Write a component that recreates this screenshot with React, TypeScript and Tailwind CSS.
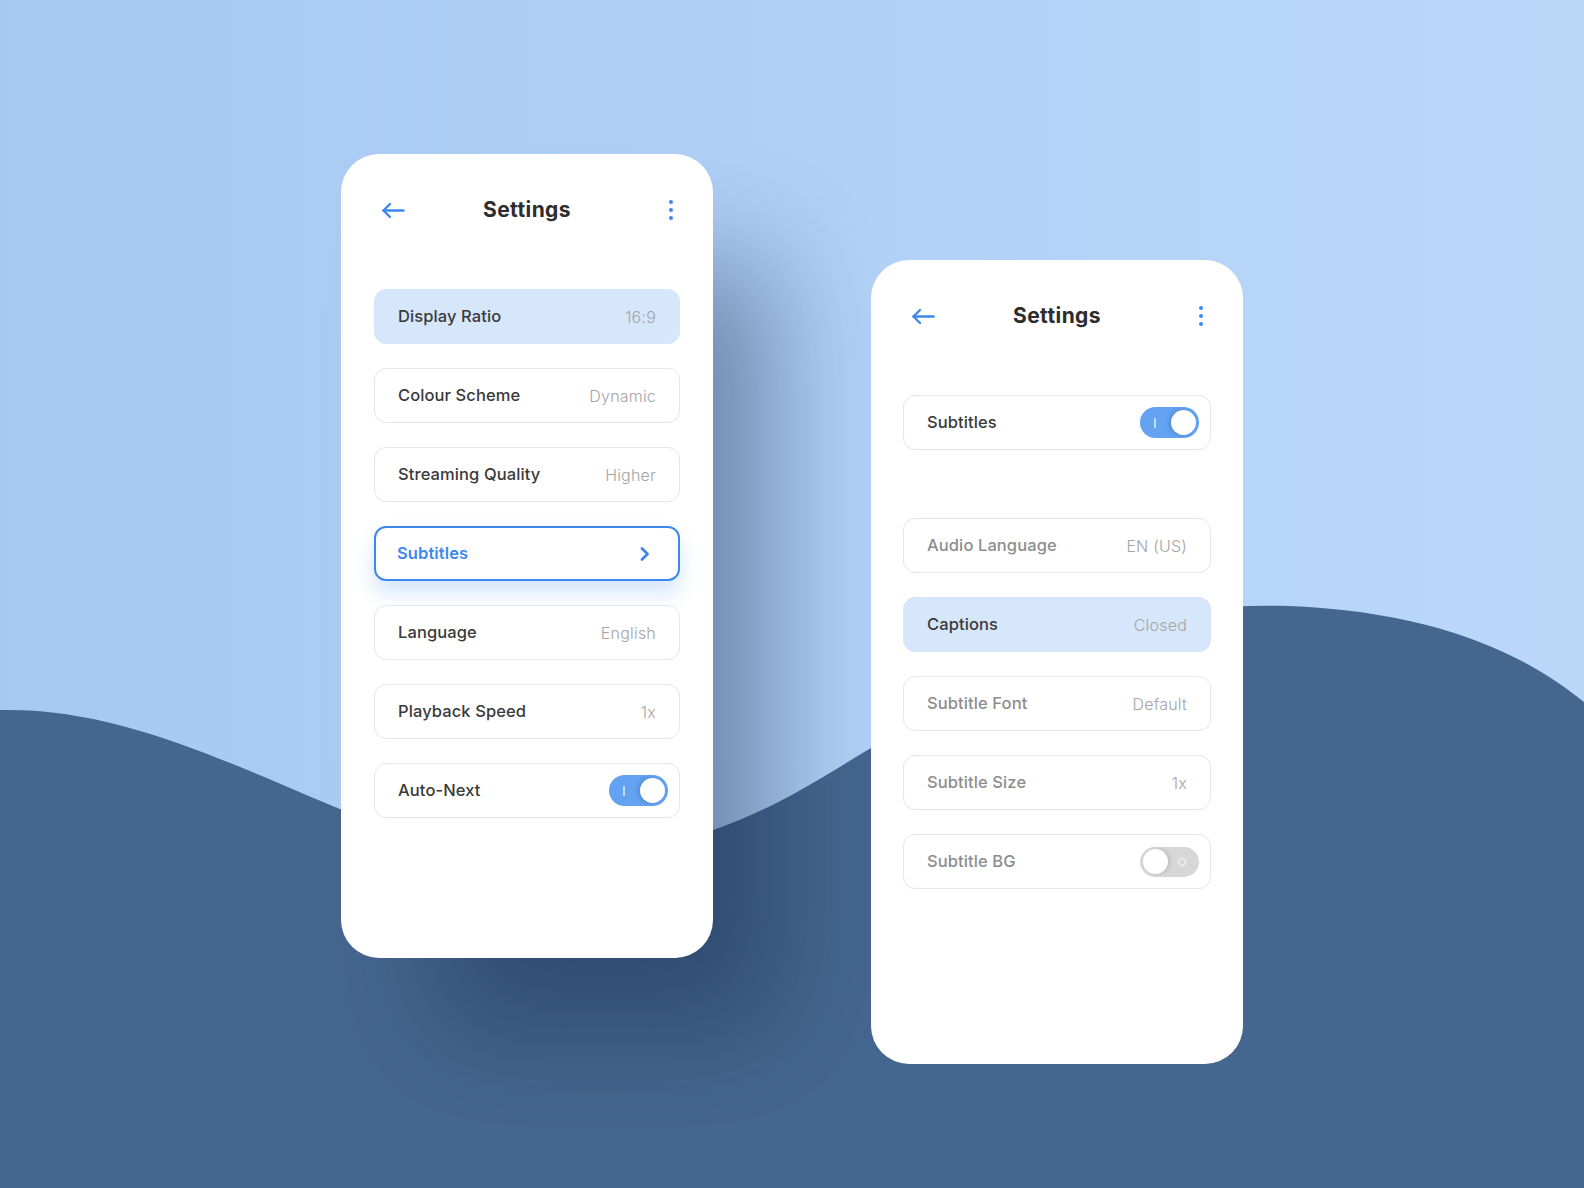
import React from 'react';

type Row = {
    label: string;
    value?: string;
    kind?: 'plain' | 'selected' | 'active' | 'toggle-on' | 'toggle-off';
    muted?: boolean;
};

const font = { fontFamily: 'Inter, "Noto Sans", sans-serif' };

const BackArrow = () => (
    <svg width="24" height="17" viewBox="0 0 24 17" fill="none" stroke="#3d88ee" strokeWidth={2.4} strokeLinecap="round" strokeLinejoin="round">
        <path d="M22.5 8.5H2.5" />
        <path d="M9 2L2.5 8.5L9 15" />
    </svg>
);

const MoreDots = () => (
    <div className="flex flex-col items-center gap-[3.5px]">
        <span className="block w-[4.5px] h-[4.5px] rounded-full bg-[#3d88ee]" />
        <span className="block w-[4.5px] h-[4.5px] rounded-full bg-[#3d88ee]" />
        <span className="block w-[4.5px] h-[4.5px] rounded-full bg-[#3d88ee]" />
    </div>
);

const Chevron = () => (
    <svg width="11" height="16" viewBox="0 0 11 16" fill="none" stroke="#3d88ee" strokeWidth={2.8} strokeLinecap="round" strokeLinejoin="round">
        <path d="M3 2.5L8.5 8L3 13.5" />
    </svg>
);

const Toggle: React.FC<{ on: boolean }> = ({ on }) =>
    on ? (
        <div className="w-[59px] h-[31px] rounded-full bg-[#63a3f1] flex items-center justify-between pl-[14px] pr-[3px]">
            <span className="block w-[1.5px] h-[10px] bg-white/60" />
            <span className="block w-[25px] h-[25px] rounded-full bg-white shadow-[-2px_0_4px_rgba(30,60,110,0.25)]" />
        </div>
    ) : (
        <div className="w-[59px] h-[30px] rounded-full bg-[#d7d7d7] flex items-center justify-between pl-[3px] pr-[13px]">
            <span className="block w-[25px] h-[25px] rounded-full bg-white shadow-[2px_0_4px_rgba(0,0,0,0.12)]" />
            <span className="block w-[8px] h-[8px] rounded-full border-[1.5px] border-white/90" />
        </div>
    );

const SettingRow: React.FC<{ row: Row }> = ({ row }) => {
    const kind = row.kind ?? 'plain';
    const box =
        kind === 'selected'
            ? 'bg-[#d6e6fb] border border-[#d6e6fb] px-[23px]'
            : kind === 'active'
            ? 'bg-white border-2 border-[#3d88ee] shadow-[0_12px_20px_rgba(61,136,238,0.22)] pl-[21px] pr-[28px]'
            : kind === 'toggle-on' || kind === 'toggle-off'
            ? 'bg-white border border-[#e6e6e6] pl-[23px] pr-[11px]'
            : 'bg-white border border-[#e6e6e6] px-[23px]';
    const labelColor =
        kind === 'active' ? 'text-[#3d88ee] font-semibold' : row.muted ? 'text-[#8d8d8d] font-medium' : 'text-[#3a3a3a] font-medium';

    return (
        <div className={`h-[55px] rounded-[12px] flex items-center justify-between ${box}`}>
            <span className={`text-[16.5px] tracking-[0.1px] ${labelColor}`}>{row.label}</span>
            {kind === 'active' && <Chevron />}
            {kind === 'toggle-on' && <Toggle on />}
            {kind === 'toggle-off' && <Toggle on={false} />}
            {row.value && <span className="text-[16px] font-light tracking-[0.2px] text-[#a4a4a4]">{row.value}</span>}
        </div>
    );
};

const Header = () => (
    <div className="h-[32px] flex items-center justify-between px-[40px]">
        <BackArrow />
        <h1 className="text-[21px] font-bold text-[#2d2d2d] tracking-[0.4px]">Settings</h1>
        <div className="w-[24px] flex justify-end">
            <MoreDots />
        </div>
    </div>
);

const leftRows: Row[] = [
    { label: 'Display Ratio', value: '16:9', kind: 'selected' },
    { label: 'Colour Scheme', value: 'Dynamic' },
    { label: 'Streaming Quality', value: 'Higher' },
    { label: 'Subtitles', kind: 'active' },
    { label: 'Language', value: 'English' },
    { label: 'Playback Speed', value: '1x' },
    { label: 'Auto-Next', kind: 'toggle-on' },
];

const rightRows: Row[] = [
    { label: 'Audio Language', value: 'EN (US)', muted: true },
    { label: 'Captions', value: 'Closed', kind: 'selected' },
    { label: 'Subtitle Font', value: 'Default', muted: true },
    { label: 'Subtitle Size', value: '1x', muted: true },
    { label: 'Subtitle BG', kind: 'toggle-off', muted: true },
];

export default function App() {
    return (
        <div
            className="relative w-[1584px] h-[1188px] overflow-hidden bg-linear-to-r from-[#a6c8f3] to-[#bbd8f9]"
            style={font}
        >
            {/* wave */}
            <svg className="absolute inset-0 z-0" width="1584" height="1188" viewBox="0 0 1584 1188" preserveAspectRatio="none">
                <path
                    d="M0 710 C200 705 380 870 560 860 C720 850 800 790 871 748 C1000 670 1100 600 1290 606 C1430 612 1520 650 1584 702 L1584 1188 L0 1188 Z"
                    fill="#45668f"
                />
            </svg>

            <div className="relative z-10 flex items-start gap-[158px] pl-[341px] pt-[154px]">
                {/* main settings */}
                <div className="w-[372px] h-[804px] rounded-[38px] bg-white pt-[40px] shadow-[80px_90px_110px_-20px_rgba(18,36,68,0.4)]">
                    <Header />
                    <div className="mt-[63px] px-[33px] flex flex-col gap-[24px]">
                        {leftRows.map((r) => (
                            <SettingRow key={r.label} row={r} />
                        ))}
                    </div>
                </div>

                {/* subtitles settings */}
                <div className="mt-[106px] w-[372px] h-[804px] rounded-[38px] bg-white pt-[40px]">
                    <Header />
                    <div className="mt-[63px] px-[32px]">
                        <SettingRow row={{ label: 'Subtitles', kind: 'toggle-on' }} />
                        <div className="mt-[68px] flex flex-col gap-[24px]">
                            {rightRows.map((r) => (
                                <SettingRow key={r.label} row={r} />
                            ))}
                        </div>
                    </div>
                </div>
            </div>
        </div>
    );
}
